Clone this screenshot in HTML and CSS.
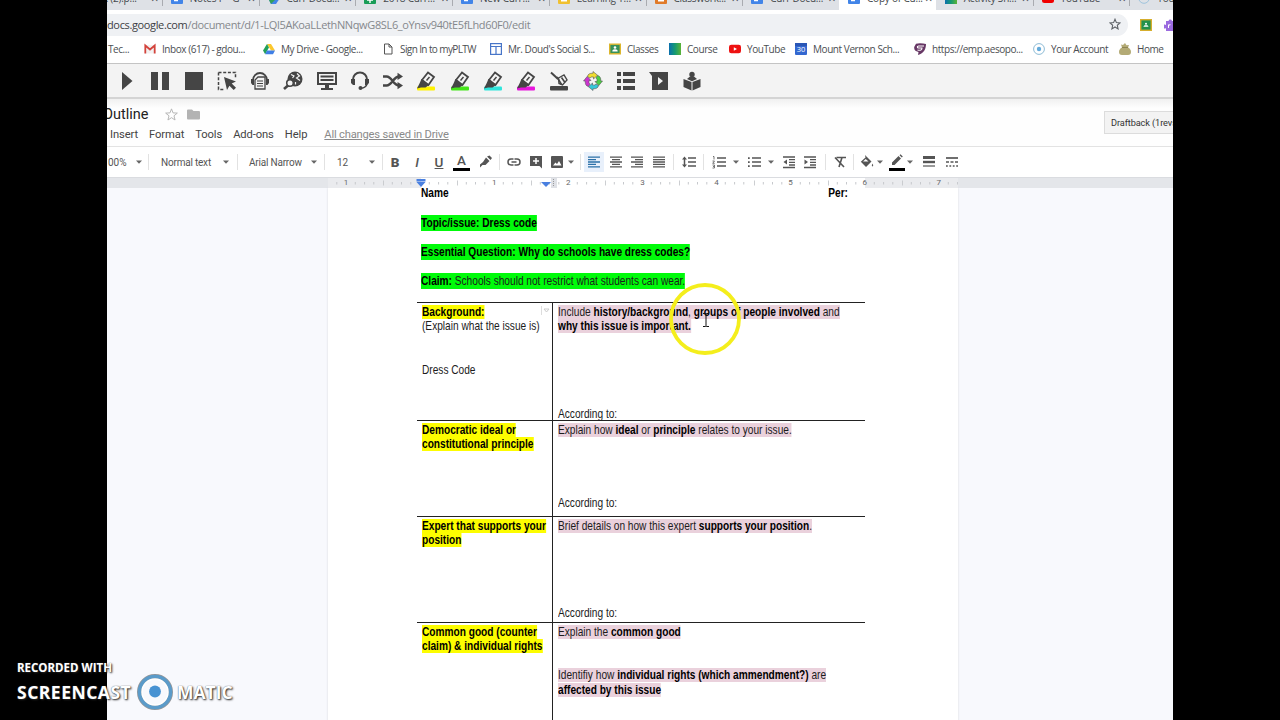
FILE: index.html
```html
<!DOCTYPE html>
<html lang="en">
<head>
    <meta charset="UTF-8">
    <meta name="viewport" content="width=device-width, initial-scale=1.0">
    <title>Outline - Google Docs</title>
    <link rel="stylesheet" href="styles.css">
</head>
<body>
    <!-- shared icons -->
    <svg class="sprite" aria-hidden="true">
        <symbol id="i-doc" viewBox="0 0 12 12"><rect width="12" height="12" rx="1" fill="#4285e8"/><path d="M3 5h6M3 8.500h4" stroke="#fff" stroke-width="1.4"/></symbol>
        <symbol id="i-marker" viewBox="0 0 20 20"><path d="M6 9 12 1.500 18 6 12.500 14z" fill="#f3f3f3" stroke="#454545" stroke-width="1.800"/><path d="M5.500 8 13 14 9.500 16.500 5 16.500 1 17.500l2.500-5z" fill="#454545"/><path d="M10.500 9.500l3-3.500" stroke="#454545" stroke-width="1.500"/></symbol>
        <symbol id="i-arrow" viewBox="0 0 6 4"><path d="M0 .5h6L3 3.7z" fill="#666"/></symbol>
        <symbol id="i-ticks" viewBox="0 0 74.1 10"><path d="M9.3 4v2.5M18.5 4v2.5M27.8 4v2.5M46.3 4v2.5M55.6 4v2.5M64.8 4v2.5M.4 2.500v5" stroke="#c6c8cc" fill="none"/></symbol>
    </svg>

    <div class="window">
        <div class="tabs">
            <div class="tab"><span class="tab-icon"></span><span class="tab-name">ork (2).p...</span><span class="tab-close">×</span></div>
            <div class="tab"><svg class="tab-icon"><use href="#i-doc"/></svg><span class="tab-name">Notes P - G</span><span class="tab-close">×</span></div>
            <div class="tab"><svg class="tab-icon" viewBox="0 0 12 12"><path d="M0 6 6 0l6 6-4 6H3z" fill="#4285e8"/><path d="M0 6 4 2l3 6-4 4z" fill="#34a05a"/></svg><span class="tab-name">Curr Docu...</span><span class="tab-close">×</span></div>
            <div class="tab"><svg class="tab-icon" viewBox="0 0 12 12"><rect width="12" height="12" rx="1" fill="#199c57"/><path d="M3 8h6M6 3v8" stroke="#fff" stroke-width="1.4"/></svg><span class="tab-name">2018 Curr...</span><span class="tab-close">×</span></div>
            <div class="tab"><svg class="tab-icon"><use href="#i-doc"/></svg><span class="tab-name">New Curr...</span><span class="tab-close">×</span></div>
            <div class="tab"><svg class="tab-icon" viewBox="0 0 12 12"><rect width="12" height="12" rx="1" fill="#f0c030"/><path d="M3 8.500h6" stroke="#fff" stroke-width="2"/></svg><span class="tab-name">Learning T...</span><span class="tab-close">×</span></div>
            <div class="tab"><svg class="tab-icon" viewBox="0 0 12 12"><rect width="12" height="12" rx="1" fill="#e07a28"/><path d="M3 8.500h6" stroke="#fff" stroke-width="2"/></svg><span class="tab-name">Classwork...</span><span class="tab-close">×</span></div>
            <div class="tab"><svg class="tab-icon"><use href="#i-doc"/></svg><span class="tab-name">Curr Docu...</span><span class="tab-close">×</span></div>
            <div class="tab active"><svg class="tab-icon"><use href="#i-doc"/></svg><span class="tab-name">Copy of Cu...</span><span class="tab-close">×</span></div>
            <div class="tab"><svg class="tab-icon" viewBox="0 0 12 12"><rect width="12" height="12" fill="url(#course)"/></svg><span class="tab-name">Activity Sh...</span><span class="tab-close">×</span></div>
            <div class="tab"><svg class="tab-icon" viewBox="0 0 12 12"><rect y="1" width="12" height="10" rx="2.5" fill="#f00000"/></svg><span class="tab-name">YouTube</span><span class="tab-close">×</span></div>
            <div class="tab"><svg class="tab-icon" viewBox="0 0 12 12"><circle cx="6" cy="6" r="5.3" fill="none" stroke="#9fc4dc"/></svg><span class="tab-name">Your Acc</span></div>
        </div>

        <div class="address-row">
            <div class="address"><span class="host">docs.google.com</span><span class="path">/document/d/1-LQl5AKoaLLethNNqwG8SL6_oYnsv940tE5fLhd60F0/edit</span>
                <svg class="star" viewBox="0 0 12 12"><path d="M6 1.2 7.4 4.6l3.6.3-2.7 2.4.8 3.6L6 9 2.9 10.9l.8-3.6L1 4.9l3.6-.3z" fill="none" stroke="#5f6368" stroke-width="1.1"/></svg>
            </div>
            <svg class="ext-class" viewBox="0 0 12 12"><rect x=".7" y=".7" width="10.6" height="10.6" fill="#23914c" stroke="#d6ae2d" stroke-width="1.4"/><path d="M3.3 7.7h5.4L7.5 6.3h-3z" fill="#fff"/><circle cx="6" cy="4.7" r="1" fill="#fff"/></svg>
            <svg class="ext-puzzle" viewBox="0 0 12 12"><path d="M2 2h2.5a1.8 1.8 0 0 1 3.5 0h4v10H2V9a2 2 0 1 1 0-3z" fill="#9b6bdf"/><path d="M4.500 9V5.500M4.500 7q0-1.500 2-1.300" fill="none" stroke="#fff"/></svg>
        </div>

        <div class="bookmarks">
            <div class="bookmark bm-tec">Tec...</div>
            <div class="bookmark bm-inbox"><svg viewBox="0 0 12 12"><path d="M1 2h10v8.500H1z" fill="#f2f2f2"/><path d="M1.300 10.500V2.500L6 6.500l4.700-4v8" fill="none" stroke="#d3433c" stroke-width="1.800"/></svg><span>Inbox (617) - gdou...</span></div>
            <div class="bookmark bm-drive"><svg viewBox="0 0 12 12"><path d="M4 1h4l4 6.500H8z" fill="#fbc72e"/><path d="M4 1l2 3.400L2.200 11.200 0 7.500z" fill="#22a05a"/><path d="M4 7.500h8l-2 3.700H2.200z" fill="#3f7fe6"/></svg><span>My Drive - Google...</span></div>
            <div class="bookmark bm-pltw"><svg viewBox="0 0 12 12"><path d="M2.500 1h4.500l3 3v7H2.500zM7 1v3h3" fill="#fff" stroke="#555"/></svg><span>Sign In to myPLTW</span></div>
            <div class="bookmark bm-doud"><svg viewBox="0 0 12 12"><rect x=".6" y=".6" width="10.800" height="10.800" fill="#fff" stroke="#4775c8" stroke-width="1.200"/><path d="M1 3.500h10M6 3.500v8" stroke="#4775c8" stroke-width="1.200"/></svg><span>Mr. Doud's Social S...</span></div>
            <div class="bookmark bm-classes"><svg viewBox="0 0 12 12"><rect x=".7" y="1.200" width="10.600" height="9.600" fill="#37915a" stroke="#dcb62e" stroke-width="1.400"/><circle cx="6" cy="4.500" r="1.300" fill="#fff"/><path d="M3.300 8.500a2.700 2.200 0 0 1 5.400 0z" fill="#fff"/></svg><span>Classes</span></div>
            <div class="bookmark bm-course"><svg viewBox="0 0 12 12"><defs><linearGradient id="course"><stop offset="0" stop-color="#0b6fae"/><stop offset=".5" stop-color="#159a72"/><stop offset="1" stop-color="#5bb336"/></linearGradient></defs><rect width="12" height="12" fill="url(#course)"/></svg><span>Course</span></div>
            <div class="bookmark bm-youtube"><svg viewBox="0 0 12 12"><rect y="1.700" width="12" height="8.600" rx="2.300" fill="#ee1111"/><path d="M4.800 4.200v3.600L8 6z" fill="#fff"/></svg><span>YouTube</span></div>
            <div class="bookmark bm-vernon"><svg viewBox="0 0 12 12"><rect width="12" height="12" rx="1" fill="#3367d0"/><rect width="12" height="3" fill="#2a56b5"/><text x="6" y="9.300" font-size="7.500" text-anchor="middle" fill="#fff">30</text></svg><span>Mount Vernon Sch...</span></div>
            <div class="bookmark bm-aesop"><svg viewBox="0 0 12 12"><path d="M2 .8C5-.2 9 .3 12 1c0 5-2 9-8 11L4.500 9C1 8 0 7 .2 4z" fill="#673765"/><path d="M10 3H4.500C3 3 3 5 4.500 5H8c0 2-1.500 2.500-4.500 2" fill="none" stroke="#fff" stroke-width="1.100"/></svg><span>https://emp.aesopo...</span></div>
            <div class="bookmark bm-account"><svg viewBox="0 0 12 12"><circle cx="6" cy="6" r="5.400" fill="none" stroke="#8dbbd5"/><circle cx="6" cy="6" r="2.200" fill="#63aadb"/></svg><span>Your Account</span></div>
            <div class="bookmark"><svg viewBox="0 0 12 12"><path d="M3 4.500C1 5.500 0 7 0 9c0 2 1 3 3 3h6c2 0 3-1 3-3 0-2-1-3.500-3-4.500L10 2 7.500 2.300 6 0 4 2 2 1.500z" fill="#b3aa75"/><path d="M3 4.500h6" stroke="#8d8452"/></svg><span>Home</span></div>
        </div>

        <!-- read & write toolbar -->
        <div class="reader">
            <div class="tool"><svg viewBox="0 0 20 20"><path d="M5 1v18l10.500-9z"/></svg></div>
            <div class="tool"><svg viewBox="0 0 20 20"><path d="M1 1h7v18H1zM12 1h7v18h-7z"/></svg></div>
            <div class="tool"><svg viewBox="0 0 20 20"><path d="M1 1h18v18H1z"/></svg></div>
            <div class="tool"><svg viewBox="0 0 20 20"><path d="M1.500 1.500h17V8M1.500 1.500v17H8" fill="none" stroke="#454545" stroke-width="1.500" stroke-dasharray="3 1.700"/><path d="M7 6l12 4.500-4.300 2 4.300 4.300-2.300 2.300-4.300-4.400L10 19z"/></svg></div>
            <div class="tool"><svg viewBox="0 0 20 20"><path d="M3 11V9a7 7 0 0 1 14 0v2" fill="none" stroke="#454545" stroke-width="1.800"/><path d="M1 8h3v6H2.500L1 12zM16 8h3v4l-1.500 2H16z"/><path d="M8 6h7v12H5V9z" fill="#f3f3f3" stroke="#454545" stroke-width="1.300"/><path d="M7 10h6M7 12.500h6M7 15h6" stroke="#454545" stroke-width="1.100"/></svg></div>
            <div class="tool"><svg viewBox="0 0 20 20"><circle cx="12" cy="8" r="7.500"/><path d="M8 3.500l3 1.500-1.500 2M14 2.500l2.500 2.500-3 2 3.500 2.500M12.500 11v2.500" stroke="#f3f3f3" stroke-width="1.200" fill="none"/><circle cx="7" cy="12" r="3.300" fill="#f3f3f3" stroke="#454545" stroke-width="1.600"/><path d="M5 14.500 1 18" stroke="#454545" stroke-width="2.600"/></svg></div>
            <div class="tool"><svg viewBox="0 0 20 20"><path fill-rule="evenodd" d="M0 1h20v13H0zM2 3v9h16V3z"/><path d="M3.500 5.500h13M3.500 9h13" stroke="#454545" stroke-width="1.800"/><path d="M8 14h4v3h4v2H4v-2h4z"/></svg></div>
            <div class="tool"><svg viewBox="0 0 20 20"><path d="M3 10V8.500a7 7 0 0 1 14 0V10" fill="none" stroke="#454545" stroke-width="2"/><path d="M1 8h4v6H3l-2-2zM15 8h4v4l-2 2h-2z"/><path d="M17 13c-1 3-3 4-6 4.300" fill="none" stroke="#454545" stroke-width="1.500"/><circle cx="10.500" cy="17" r="2"/></svg></div>
            <div class="tool"><svg viewBox="0 0 22 20"><path d="M0 5h4c6 0 7 10 14 10M0 15h4c6 0 7-10 14-10" fill="none" stroke="#454545" stroke-width="2.800"/><path d="M16 1l6 4-6 4zM16 11l6 4-6 4z"/></svg></div>
            <div class="tool"><svg viewBox="0 0 20 20"><rect x="1" y="15.500" width="18" height="4" rx="1" fill="#fff200"/><use href="#i-marker"/></svg></div>
            <div class="tool"><svg viewBox="0 0 20 20"><rect x="1" y="15.500" width="18" height="4" rx="1" fill="#45e51a"/><use href="#i-marker"/></svg></div>
            <div class="tool"><svg viewBox="0 0 20 20"><rect x="1" y="15.500" width="18" height="4" rx="1" fill="#2fe5dc"/><use href="#i-marker"/></svg></div>
            <div class="tool"><svg viewBox="0 0 20 20"><rect x="1" y="15.500" width="18" height="4" rx="1" fill="#e815dc"/><use href="#i-marker"/></svg></div>
            <div class="tool"><svg viewBox="0 0 20 20"><rect x="1" y="15" width="18" height="4.500" rx="1"/><path d="M2 1.500 9 8" stroke="#454545" stroke-width="2"/><path d="M9.500 7 15 4l3 5-4.500 5-3.500-1.500z" fill="#f3f3f3" stroke="#454545" stroke-width="1.400"/><path d="M8 6l4.500 7.500M12.500 6.500l3.500 5" stroke="#454545" stroke-width="1.600"/></svg></div>
            <div class="tool"><svg viewBox="0 0 20 20" stroke="#555" stroke-width=".6"><path d="M4.500 5.500Q5 2 10 2.200V.5l4.500 3.700L10.500 8V6Q8 5.500 7 7z" fill="#f0dd30"/><path d="M14.500 4.500Q18 5 17.800 10h1.700l-3.700 4.500L12 10.500h2Q14.500 8 13 7z" fill="#4bd044"/><path d="M15.500 14.500Q15 18 10 17.800v1.700l-4.500-3.700L9.500 12v2q2.500.5 3.500-1z" fill="#35c8d8"/><path d="M5.500 15.500Q2 15 2.200 10H.5l3.700-4.500L8 9.500H6Q5.500 12 7 13z" fill="#cb33cf"/></svg></div>
            <div class="tool"><svg viewBox="0 0 20 20"><path d="M1 1h4v4H1zM7 1h12v4H7zM1 8h4v4H1zM7 8h12v4H7zM1 15h4v4H1zM7 15h12v4H7z"/></svg></div>
            <div class="tool"><svg viewBox="0 0 20 20"><path d="M0 1h19v18H3V5z"/><path d="M9 6v8l5-4z" fill="#f3f3f3"/></svg></div>
            <div class="tool"><svg viewBox="0 0 20 20"><path d="M1.500 8 9.500 11v8.500l-8-3.500zM18.500 8l-8 3v8.500l8-3.500z"/><circle cx="10" cy="3.500" r="2.700"/><path d="M5 8 8 5.500h4L15 8l-5 2.200z"/></svg></div>
        </div>

        <div class="docs-header">
            <div class="title-row">
                <span class="doc-title">Outline</span>
                <svg class="title-star" viewBox="0 0 12 12"><path d="M6 .8 7.400 4.500l4 .2-3.100 2.500 1 3.900L6 8.900 2.700 11.100l1-3.900L.6 4.700l4-.2z" fill="none" stroke="#b5b5b5" stroke-width=".9"/></svg>
                <svg class="title-folder" viewBox="0 0 13 11"><path d="M0 1.500Q0 .5 1 .5h4l1.500 1.500H12q1 0 1 1v6.500q0 1-1 1H1q-1 0-1-1z" fill="#b3b3b3"/></svg>
            </div>
            <div class="menu-row">
                <span>Insert</span><span>Format</span><span>Tools</span><span>Add-ons</span><span>Help</span>
                <a class="saved">All changes saved in Drive</a>
            </div>
            <div class="draftback">Draftback (1revs)</div>
        </div>

        <div class="toolbar">
            <div class="group g-zoom"><span>00%</span><svg class="arrow"><use href="#i-arrow"/></svg></div>
            <div class="group g-style"><span>Normal text</span><svg class="arrow"><use href="#i-arrow"/></svg></div>
            <div class="group g-font"><span>Arial Narrow</span><svg class="arrow"><use href="#i-arrow"/></svg></div>
            <div class="group g-size"><span>12</span><svg class="arrow"><use href="#i-arrow"/></svg></div>
            <div class="group g-text">
                <b class="glyph">B</b><i class="glyph">I</i><u class="glyph">U</u><span class="glyph glyph-color">A</span>
                <svg class="pen" viewBox="0 0 14 14"><path d="M8 1.500l3.500 3.500 1.500-2L10.500.5zM7 2.500l3.500 3.500-4 4H3.500L1 12.500V9.500L4 7z"/></svg>
            </div>
            <div class="group g-insert">
                <svg viewBox="0 0 14 14"><path d="M6.500 4H4a3 3 0 0 0 0 6h2.500M7.500 4H10a3 3 0 0 1 0 6H7.500M4.500 7h5" fill="none" stroke="#555" stroke-width="1.500"/></svg>
                <svg viewBox="0 0 14 14"><path d="M1 1h12v12.500L10.500 11H1z"/><path d="M7 3v6M4 6h6" stroke="#fff" stroke-width="1.500"/></svg>
                <svg viewBox="0 0 14 14"><rect x="1" y="1" width="12" height="12" rx="1"/><path d="M3 10.500l2.500-3 1.500 1.500 2-3 2.500 4.500z" fill="#fff"/></svg>
                <svg class="arrow"><use href="#i-arrow"/></svg>
            </div>
            <div class="group g-align">
                <span class="align on"><svg viewBox="0 0 12 12"><path d="M0 1.200h12M0 3.600h8M0 6h12M0 8.400h8M0 10.800h12" stroke="#2b70a8" stroke-width="1.300"/></svg></span>
                <span class="align"><svg viewBox="0 0 12 12"><path d="M0 1.200h12M2 3.600h8M0 6h12M2 8.400h8M0 10.800h12" stroke="#555" stroke-width="1.300"/></svg></span>
                <span class="align"><svg viewBox="0 0 12 12"><path d="M0 1.200h12M4 3.600h8M0 6h12M4 8.400h8M0 10.800h12" stroke="#555" stroke-width="1.300"/></svg></span>
                <span class="align"><svg viewBox="0 0 12 12"><path d="M0 1.200h12M0 3.600h12M0 6h12M0 8.400h12M0 10.800h12" stroke="#555" stroke-width="1.300"/></svg></span>
            </div>
            <div class="group g-spacing"><svg viewBox="0 0 14 14"><path d="M6 3h8M6 7h8M6 11h8M2.500 3v8" stroke="#555" stroke-width="1.500"/><path d="M0 4.500 2.500 1.500 5 4.500zM0 9.500l2.500 3 2.500-3z"/></svg></div>
            <div class="group g-lists">
                <svg class="w-num" viewBox="0 0 14 14"><path d="M5 3h9M5 7h9M5 11h9" stroke="#555" stroke-width="1.500"/><path d="M1 1.500h1v3M.5 6h2L.7 8.300h2M.5 10h2v3h-2M1 11.500h1" fill="none" stroke="#555" stroke-width=".8"/></svg>
                <svg class="arrow w-arr1"><use href="#i-arrow"/></svg>
                <svg class="w-bul" viewBox="0 0 14 14"><path d="M5 3h9M5 7h9M5 11h9" stroke="#555" stroke-width="1.500"/><path d="M1 2.200h1.700v1.700H1zM1 6.200h1.700v1.700H1zM1 10.200h1.700v1.700H1z"/></svg>
                <svg class="arrow w-arr2"><use href="#i-arrow"/></svg>
                <svg class="w-out" viewBox="0 0 14 14"><path d="M1 2h12M7 4.700h6M7 7.300h6M7 10h6M1 12.500h12" stroke="#555" stroke-width="1.300"/><path d="M5 4.500v5L1.500 7z"/></svg>
                <svg class="w-in" viewBox="0 0 14 14"><path d="M1 2h12M7 4.700h6M7 7.300h6M7 10h6M1 12.500h12" stroke="#555" stroke-width="1.300"/><path d="M1.500 4.500v5L5 7z"/></svg>
            </div>
            <div class="group g-clear"><svg viewBox="0 0 14 14"><path d="M3.500 2.500H13M9 2.500 6 12M2 2.500l9 9.500" fill="none" stroke="#555" stroke-width="1.600"/></svg></div>
            <div class="group g-cell">
                <svg class="w-fill" viewBox="0 0 14 14"><path d="M5 0l6.500 6.500L6 12 .8 6.800 5.500 2.500z"/><path d="M3 6.500h5.500L5.700 4z" fill="#fff"/><path d="M12.500 8.500q1.500 2 0 3.200-1.500-1.200 0-3.200z"/></svg>
                <svg class="arrow w-a1"><use href="#i-arrow"/></svg>
                <span class="border-color"><svg viewBox="0 0 12 12"><path d="M1 11V8.500L7.500 2 10 4.500 3.500 11zM8.500 1.200l1-1 2.300 2.300-1 1z"/></svg></span>
                <svg class="arrow w-a2"><use href="#i-arrow"/></svg>
                <svg class="w-width" viewBox="0 0 14 14"><path d="M1 2.500h12" stroke="#555" stroke-width="3"/><path d="M1 7h12" stroke="#555" stroke-width="2.400"/><path d="M1 11h12" stroke="#555" stroke-width="1.200"/></svg>
                <svg class="w-dash" viewBox="0 0 14 14"><path d="M1 3h12" stroke="#555" stroke-width="1.700"/><path d="M1 7h3M5.500 7h3M10 7h3M1 11h1.800M4.400 11h1.800M7.800 11h1.800M11.200 11H13" stroke="#555" stroke-width="1.500"/></svg>
            </div>
        </div>

        <div class="ruler">
            <div class="ruler-page">
                <div class="ruler-text"></div>
                <div class="ruler-track">
                    <div class="inch"><svg><use href="#i-ticks"/></svg><span>1</span></div>
                    <div class="inch"><svg><use href="#i-ticks"/></svg></div>
                    <div class="inch"><svg><use href="#i-ticks"/></svg><span>1</span></div>
                    <div class="inch"><svg><use href="#i-ticks"/></svg><span>2</span></div>
                    <div class="inch"><svg><use href="#i-ticks"/></svg><span>3</span></div>
                    <div class="inch"><svg><use href="#i-ticks"/></svg><span>4</span></div>
                    <div class="inch"><svg><use href="#i-ticks"/></svg><span>5</span></div>
                    <div class="inch"><svg><use href="#i-ticks"/></svg><span>6</span></div>
                    <div class="inch"><svg><use href="#i-ticks"/></svg><span>7</span></div>
                </div>
                <svg class="indent indent-left" viewBox="0 0 10 10"><path d="M.5 1h9v2.500h-9zM.5 4h9L5 9z" fill="#4a80e0"/></svg>
                <svg class="indent indent-col" viewBox="0 0 16 10"><path d="M10 0h6v10h-6z" fill="#dfe1e6"/><path d="M0 4h10L5 9z" fill="#4a80e0"/><path d="M12.500 1v8" stroke="#999" stroke-dasharray="1 1"/></svg>
            </div>
        </div>

        <div class="canvas">
            <div class="page">
                <div class="name-line"><b class="narrow">Name</b><b class="narrow per">Per:</b></div>
                <p class="intro narrow"><span class="green"><b>Topic/issue: Dress code</b></span></p>
                <p class="intro narrow"><span class="green"><b>Essential Question: Why do schools have dress codes?</b></span></p>
                <p class="intro narrow"><span class="green"><b>Claim:</b> Schools should not restrict what students can wear.</span></p>

                <div class="outline">
                    <div class="row row-background">
                        <div class="cell">
                            <div class="narrow"><span class="yellow"><b>Background:</b></span><br>(Explain what the issue is)<br><br><br>Dress Code</div>
                            <svg class="cell-menu" viewBox="0 0 9 9"><path d="M.5 0v9" stroke="#ddd" fill="none"/><path d="M3 3h5L5.500 6z" fill="none" stroke="#ccc"/></svg>
                        </div>
                        <div class="cell">
                            <div class="narrow"><span class="rose">Include <b>history/background</b>, <b>groups of people involved</b> and<br><b>why this issue is important.</b></span><br><br><br><br><br><br>According to:</div>
                        </div>
                    </div>
                    <div class="row row-ideal">
                        <div class="cell">
                            <div class="narrow"><span class="yellow"><b>Democratic ideal or<br>constitutional principle</b></span></div>
                        </div>
                        <div class="cell">
                            <div class="narrow"><span class="rose">Explain how <b>ideal</b> or <b>principle</b> relates to your issue.</span><br><br><br><br><br>According to:</div>
                        </div>
                    </div>
                    <div class="row row-expert">
                        <div class="cell">
                            <div class="narrow"><span class="yellow"><b>Expert that supports your<br>position</b></span></div>
                        </div>
                        <div class="cell">
                            <div class="narrow"><span class="rose">Brief details on how this expert <b>supports your position</b>.</span><br><br><br><br><br><br>According to:</div>
                        </div>
                    </div>
                    <div class="row row-common">
                        <div class="cell">
                            <div class="narrow"><span class="yellow"><b>Common good (counter<br>claim) &amp; individual rights</b></span></div>
                        </div>
                        <div class="cell">
                            <div class="narrow"><span class="rose">Explain the <b>common good</b></span><br><br><br><span class="rose">Identifiy how <b>individual rights (which ammendment?)</b> are<br><b>affected by this issue</b></span></div>
                        </div>
                    </div>
                </div>
            </div>
        </div>
    </div>

    <svg class="pointer" viewBox="0 0 76 76"><circle cx="38" cy="38" r="34" fill="none" stroke="#f4ee1c" stroke-width="3.800"/><path d="M36 45.500h2.500l.5-.5.500.5H42M39 45V33M36 32.500h2.500l.5.500.500-.5H42" fill="none" stroke="#111"/></svg>

    <div class="watermark">
        <div class="wm-top">RECORDED WITH</div>
        <div class="wm-bottom">
            <span class="wm-left">SCREENCAST</span>
            <svg viewBox="0 0 38 38"><circle cx="19" cy="19" r="15.500" fill="none" stroke="#333" stroke-opacity=".5" stroke-width="5"/><circle cx="19" cy="19" r="15.500" fill="none" stroke="#5b9bc9" stroke-width="3.600"/><circle cx="19" cy="19" r="13" fill="none" stroke="#fff" stroke-width="1.500"/><circle cx="19" cy="18.500" r="5.900" fill="#4792d2"/></svg>
            <span class="wm-right">MATIC</span>
        </div>
    </div>
</body>
</html>
```
FILE: styles.css
```css
* {
    box-sizing: border-box;
}

body {
    margin: 0;
    width: 1280px;
    height: 720px;
    overflow: hidden;
    background: #000;
    font-family: Roboto, sans-serif;
}

svg {
    display: block;
    flex: none;
}

.sprite {
    position: absolute;
    width: 0;
    height: 0;
}

.window {
    width: 1066px;
    height: 720px;
    margin-left: 107px;
    overflow: hidden;
    background: #fff;
    display: flex;
    flex-direction: column;
}

/* browser tabs */
.tabs {
    display: flex;
    flex: none;
    height: 10px;
    background: #dee1e6;
    overflow: hidden;
}

.tab {
    flex: none;
    display: flex;
    align-items: center;
    width: 96.75px;
    height: 24px;
    margin-top: -14px;
    padding-left: 8px;
    border-left: 1px solid transparent;
    border-image: linear-gradient(#a9abb0 19px, #dee1e6 19px) 1;
    font-family: "Open Sans", sans-serif;
    font-size: 10px;
    color: #45494d;
    white-space: nowrap;
}

.tab:first-child {
    margin-left: -42px;
}

.tab.active {
    background: #fff;
    border-image: none;
}

.tab.active + .tab {
    border-image: none;
}

.tab-icon {
    width: 12px;
    height: 12px;
    margin-right: 7px;
}

.tab-name {
    width: 58px;
    letter-spacing: -0.2px;
}

.tab-close {
    font-size: 13px;
}

/* address bar */
.address-row {
    display: flex;
    flex: none;
    align-items: center;
    height: 27px;
    padding-top: 3px;
}

.address {
    display: flex;
    flex: none;
    align-items: center;
    width: 1021px;
    height: 22px;
    padding-bottom: 2px;
    background: #eff1f4;
    border-radius: 0 11px 11px 0;
    font-family: "Open Sans", sans-serif;
    font-size: 11px;
    letter-spacing: -0.36px;
}

.host {
    color: #3c4043;
}

.path {
    color: #85888c;
}

.star {
    width: 12px;
    height: 12px;
    margin: 0 7px 0 auto;
}

.ext-class {
    width: 12px;
    height: 12px;
    margin-left: 12px;
}

.ext-puzzle {
    width: 12px;
    height: 12px;
    margin-left: 12px;
}

/* bookmarks */
.bookmarks {
    display: flex;
    flex: none;
    height: 27px;
    padding-bottom: 3px;
    border-bottom: 1px solid #c4c4c4;
    font-family: "Open Sans", sans-serif;
    font-size: 10px;
    letter-spacing: -0.43px;
    color: #4b4e52;
}

.bookmark {
    flex: none;
    display: flex;
    align-items: center;
    gap: 6px;
    white-space: nowrap;
}

.bookmark svg {
    width: 12px;
    height: 12px;
    letter-spacing: 0;
}

.bm-tec { width: 37px; padding-left: 1px; }
.bm-inbox { width: 119px; }
.bm-drive { width: 119px; }
.bm-pltw { width: 108px; letter-spacing: -0.6px; }
.bm-doud { width: 119px; }
.bm-classes { width: 60px; }
.bm-course { width: 60px; }
.bm-youtube { width: 66px; }
.bm-vernon { width: 119px; }
.bm-aesop { width: 119px; }
.bm-account { width: 86px; }

/* reading toolbar */
.reader {
    display: flex;
    flex: none;
    align-items: center;
    height: 35px;
    padding-left: 3.500px;
    background: #f3f3f3;
    border-bottom: 2px solid #d4d4d4;
}

.tool {
    display: flex;
    justify-content: center;
    width: 33.25px;
}

.tool svg {
    width: 20px;
    height: 20px;
    fill: #454545;
}

/* docs title and menus */
.docs-header {
    position: relative;
    flex: none;
    height: 48px;
    background: linear-gradient(#f0f0f0, #fefefe 9px);
    border-bottom: 1px solid #e3e3e3;
}

.title-row {
    display: flex;
    align-items: center;
    height: 25px;
    padding-top: 6px;
}

.doc-title {
    margin-left: -4px;
    font-size: 14.500px;
    color: #222;
    width: 62px;
}

.title-star {
    width: 13px;
    height: 13px;
}

.title-folder {
    width: 13px;
    height: 11px;
    margin-left: 9px;
}

.menu-row {
    display: flex;
    align-items: center;
    gap: 11px;
    height: 20px;
    padding-left: 3px;
    font-size: 11.2px;
    letter-spacing: -0.1px;
    color: #444;
}

.saved {
    margin-left: 6px;
    letter-spacing: -0.2px;
    color: #8a8a8a;
    text-decoration: underline;
}

.draftback {
    position: absolute;
    left: 997px;
    top: 12px;
    width: 90px;
    height: 23px;
    padding-left: 6px;
    background: #f3f3f3;
    border: 1px solid #dcdcdc;
    font-size: 9.2px;
    letter-spacing: -0.1px;
    line-height: 21px;
    color: #333;
    white-space: nowrap;
}

/* formatting toolbar */
.toolbar {
    display: flex;
    flex: none;
    align-items: center;
    height: 31px;
    border-bottom: 1px solid #dadce0;
    font-size: 10px;
    color: #555;
}

.group {
    display: flex;
    flex: none;
    align-items: center;
    height: 16px;
    border-left: 1px solid #e2e2e2;
    white-space: nowrap;
}

.group svg {
    width: 14px;
    height: 14px;
    fill: #555;
}

.group .arrow {
    width: 6px;
    height: 4px;
}

.g-zoom { width: 41px; border: none; padding: 0 6px 0 1px; justify-content: space-between; }
.g-style { width: 89px; padding: 0 8px 0 12px; justify-content: space-between; letter-spacing: -0.2px; }
.g-font { width: 87px; padding: 0 7px 0 11px; justify-content: space-between; letter-spacing: -0.2px; }
.g-size { width: 58px; padding: 0 7px 0 12px; justify-content: space-between; }
.g-text { width: 117px; padding-left: 1px; }
.g-insert { width: 81px; padding-left: 7px; gap: 7.5px; }
.g-insert .arrow { margin-left: -4px; }
.g-align { width: 93px; padding-left: 3px; gap: 1.6px; }
.g-spacing { width: 30px; justify-content: center; }
.g-lists { width: 122px; padding-left: 7.500px; }
.g-clear { width: 28px; justify-content: center; }
.g-cell { width: 120px; padding-left: 6px; }

.glyph {
    width: 22px;
    text-align: center;
    font-size: 13.5px;
    font-weight: 500;
    line-height: 14px;
}

b.glyph {
    font-weight: 900;
}

.glyph-color {
    width: 17px;
    height: 17px;
    margin-left: 3px;
    line-height: 12px;
    border-bottom: 3px solid #000;
}

.pen {
    margin-left: 9px;
}

.align {
    display: flex;
    align-items: center;
    justify-content: center;
    width: 20px;
    height: 20px;
}

.align svg {
    width: 12px;
    height: 12px;
}

.on {
    background: #e8f0fb;
}

.group .w-arr1 { margin-left: 7px; }
.w-bul { margin-left: 8px; }
.group .w-arr2 { margin-left: 7px; }
.w-out { margin-left: 8.5px; }
.w-in { margin-left: 7px; }
.group .w-a1 { margin-left: 3px; }
.group .w-a2 { margin-left: 2px; }
.w-width { margin-left: 9px; }
.w-dash { margin-left: 9px; }

.border-color {
    display: flex;
    justify-content: center;
    width: 16px;
    height: 17px;
    margin-left: 6px;
    border-bottom: 3px solid #000;
}

.border-color svg {
    width: 12px;
    height: 12px;
}

/* ruler */
.ruler {
    flex: none;
    height: 10px;
    background: #e4e6ea;
}

.ruler-page {
    position: relative;
    width: 630px;
    height: 10px;
    margin-left: 221px;
    background: #eaebee;
    overflow: hidden;
}

.ruler-text {
    position: absolute;
    left: 93px;
    width: 444px;
    height: 10px;
    background: #fff;
}

.ruler-track {
    position: relative;
    display: flex;
    margin-left: -19px;
}

.inch {
    flex: none;
    position: relative;
    width: 74.1px;
    height: 10px;
    text-align: center;
    font-size: 8px;
    line-height: 10px;
    color: #666;
}

.inch svg {
    position: absolute;
    width: 74.1px;
    height: 10px;
}

.indent {
    position: absolute;
    top: 0;
    height: 10px;
}

.indent-left {
    left: 88px;
    width: 10px;
}

.indent-col {
    left: 213px;
    width: 16px;
}

/* document */
.canvas {
    flex: 1;
    min-height: 0;
    background: #f8f9fd;
}

.page {
    width: 630px;
    height: 600px;
    margin-left: 221px;
    padding: 0 93px 0 89px;
    background: #fff;
    box-shadow: 0 0 2px #d5d7dc;
    font-family: "Liberation Sans", Arial, sans-serif;
    font-size: 12.33px;
    line-height: 14.65px;
    color: #1c1c1c;
    white-space: nowrap;
}

.page b {
    color: #000;
}

/* condensed face for the whole document text */
.narrow {
    transform: scaleX(0.822);
    transform-origin: 0 0;
}

.name-line {
    display: flex;
    justify-content: space-between;
    height: 27.5px;
    padding: 0 17px 0 3.500px;
    line-height: 11px;
}

.per {
    transform-origin: 100% 0;
}

.intro {
    width: max-content;
    height: 29.3px;
    margin: 0 0 0 3.500px;
}

.green {
    padding: 1px 0;
    background: #00fb0a;
}

.yellow {
    background: #fdfd00;
}

.rose {
    background: #ead1dc;
}

.outline {
    border-top: 1px solid #222;
    margin-top: -1.4px;
}

.row {
    display: grid;
    grid-template-columns: 135px 1fr;
    border-bottom: 1px solid #222;
}

.cell {
    position: relative;
    padding: 1.5px 0 0 5px;
}

.cell .narrow {
    width: max-content;
}

.cell + .cell {
    border-left: 1px solid #222;
    padding-left: 4.500px;
}

.cell-menu {
    position: absolute;
    top: 3px;
    right: 2px;
    width: 9px;
    height: 9px;
}

.row-background { height: 118px; }
.row-ideal { height: 96px; }
.row-expert { height: 106px; }
.row-common { height: 120px; }

/* highlighted text cursor */
.pointer {
    position: absolute;
    left: 667px;
    top: 281px;
    width: 76px;
    height: 76px;
}

/* recorder watermark */
.watermark {
    position: absolute;
    left: 17px;
    top: 660px;
    font-family: "Open Sans", sans-serif;
    font-weight: bold;
    color: #fff;
    text-shadow: 1px 1px 2px #222, 0 0 1px #555;
}

.wm-top {
    font-size: 11.500px;
    line-height: 16px;
}

.wm-bottom {
    display: flex;
    align-items: center;
    height: 32px;
    font-size: 17.500px;
}

.wm-bottom svg {
    width: 38px;
    height: 38px;
}

.wm-left {
    width: 119px;
    letter-spacing: 0.5px;
}

.wm-right {
    margin-left: 3px;
}
```
